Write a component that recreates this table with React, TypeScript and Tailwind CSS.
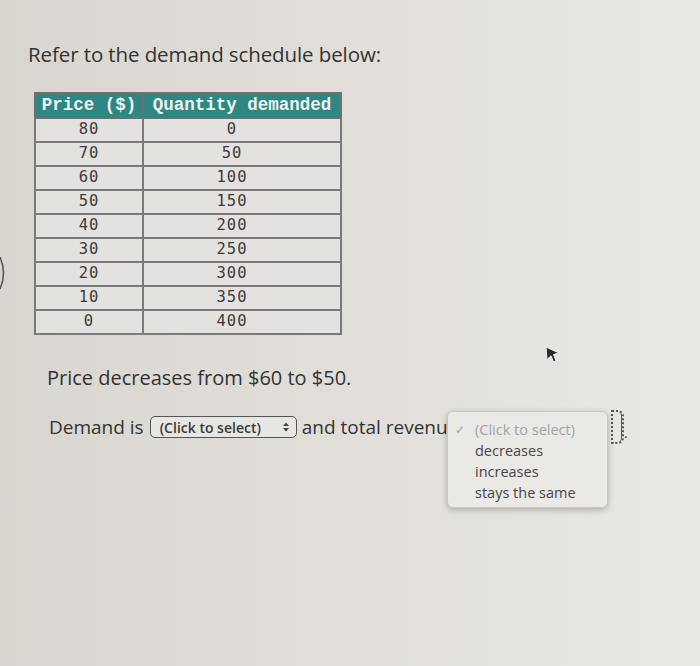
import React from "react";

const rows: [string, string][] = [
  ["80", "0"],
  ["70", "50"],
  ["60", "100"],
  ["50", "150"],
  ["40", "200"],
  ["30", "250"],
  ["20", "300"],
  ["10", "350"],
  ["0", "400"],
];

const sans = "font-['Open_Sans','Lato',sans-serif]";
const headMono = "font-['Liberation_Mono','Courier_New',monospace]";
const cellMono = "font-['DejaVu_Sans_Mono','Liberation_Mono',monospace]";

export default function App() {
  return (
    <div
      className={`relative h-[666px] w-[700px] overflow-hidden bg-gradient-to-r from-[#d9d6d0] via-[#e2dfda] to-[#eae8e4] text-[#333] ${sans}`}
    >
      {/* bit of a bracket at the left edge */}
      <svg className="absolute left-0 top-[255px]" width="8" height="36" viewBox="0 0 8 36">
        <path d="M0 2 Q7 18 0 34" fill="none" stroke="#555" strokeWidth="1.6" />
      </svg>

      <div className="pl-[28px] pt-[41px]">
        <p className="text-[20.5px] leading-[27px] tracking-[-0.1px]">Refer to the demand schedule below:</p>

        <table className={`ml-[6px] mt-[24px] border-collapse border-2 border-[#6f6f6f]`}>
          <thead>
            <tr className={`bg-[#2e8783] text-[#eef3f1] ${headMono}`}>
              <th className="h-[25px] w-[108px] border-2 border-[#6f6f6f] px-1 text-[17.5px] font-bold leading-none">
                Price ($)
              </th>
              <th className="h-[25px] w-[198px] border-2 border-[#6f6f6f] px-1 text-[17.5px] font-bold leading-none">
                Quantity demanded
              </th>
            </tr>
          </thead>
          <tbody className={cellMono}>
            {rows.map(([p, q]) => (
              <tr key={p} className="bg-[#e4e2de] text-[#3a3a3a]">
                <td className="h-[24px] border-2 border-[#7a7a7a] text-center text-[15.5px] leading-none tracking-[1px]">
                  {p}
                </td>
                <td className="h-[24px] border-2 border-[#7a7a7a] pr-[20px] text-center text-[15.5px] leading-none tracking-[1px]">
                  {q}
                </td>
              </tr>
            ))}
          </tbody>
        </table>

        <p className="ml-[19px] mt-[30px] text-[20px] leading-[26px]">Price decreases from $60 to $50.</p>

        <div className="relative ml-[21px] mt-[23px] flex h-[26px] items-center text-[19px]">
          <span>Demand is</span>
          <span className="ml-[6px] flex h-[22px] w-[147px] items-center justify-between rounded-[5px] border-[1.5px] border-[#555] bg-[#e8e6e2] pl-[9px] pr-[6px] text-[14px] font-semibold tracking-normal text-[#3a3a3a]">
            (Click to select)
            <svg width="8" height="12" viewBox="0 0 8 12">
              <path d="M1 5 L4 1.5 L7 5 Z M1 7 L4 10.5 L7 7 Z" fill="#444" />
            </svg>
          </span>
          <span className="ml-[5px]">and total revenu</span>

          {/* open dropdown */}
          <div className="absolute left-[398px] top-[-3px] w-[161px] rounded-[6px] border border-[#c9c7c3] bg-[#ebe9e5] pb-[4px] pt-[7px] tracking-normal shadow-[0_2px_6px_rgba(0,0,0,0.25)]">
            <div className="flex h-[21px] items-center text-[14.5px] text-[#a3a3a3]">
              <span className="w-[27px] pl-[7px] text-[12px]">✓</span>
              <span>(Click to select)</span>
            </div>
            {["decreases", "increases", "stays the same"].map((o) => (
              <div key={o} className="flex h-[21px] items-center pl-[27px] text-[14.5px] text-[#474747]">
                {o}
              </div>
            ))}
          </div>

          {/* right end of the select with focus outline */}
          <div className="absolute left-[564px] top-[-2px] flex items-start">
            <div className="h-[30px] w-[9px] rounded-r-[4px] border-r-[1.5px] border-[#555] outline-2 outline-dotted outline-[#555]"></div>
            <span className="ml-[2px] mt-[14px] text-[14px] leading-none">.</span>
          </div>
        </div>
      </div>

      {/* mouse cursor */}
      <svg className="absolute left-[544px] top-[345px]" width="18" height="20" viewBox="0 0 18 20">
        <path d="M2 2 L15 8 L9.5 9.5 L12 16 L9.5 17 L7 10.8 L3 14.5 Z" fill="#2a2a2a" stroke="#f2f2f2" strokeWidth="1" />
      </svg>
    </div>
  );
}
